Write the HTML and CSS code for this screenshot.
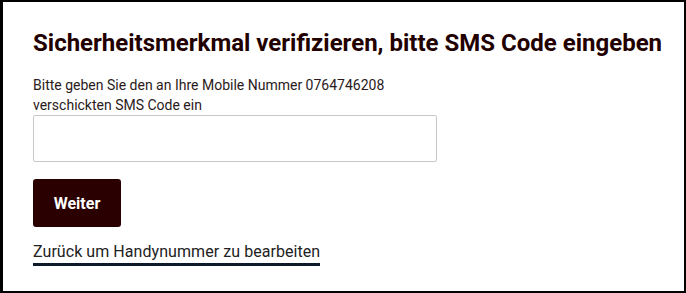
FILE: index.html
```html
<!DOCTYPE html>
<html lang="de">
<head>
<meta charset="utf-8">
<link rel="stylesheet" href="styles.css">
</head>
<body>
<div class="frame">
  <h1 class="title">Sicherheitsmerkmal verifizieren, bitte SMS Code eingeben</h1>
  <p class="hint">Bitte geben Sie den an Ihre Mobile Nummer 0764746208<br>verschickten SMS Code ein</p>
  <input class="code" type="text">
  <button class="btn" type="button">Weiter</button>
  <a class="back" href="#">Zurück um Handynummer zu bearbeiten</a>
</div>
</body>
</html>
```

FILE: styles.css
```css
html, body {
  margin: 0;
  padding: 0;
  background: #fff;
}
.frame {
  box-sizing: border-box;
  width: 686px;
  height: 293px;
  border: 2px solid #000;
  border-left-width: 3px;
  padding: 26px 0 0 30px;
  display: flex;
  flex-direction: column;
  align-items: flex-start;
  font-family: Roboto, "Liberation Sans", sans-serif;
}
.title {
  margin: 0;
  font-size: 24px;
  font-weight: 700;
  line-height: 30px;
  color: #220000;
}
.hint {
  margin: 17px 0 0;
  font-size: 14px;
  line-height: 20px;
  color: #2a1a1a;
}
.code {
  box-sizing: border-box;
  margin: 0;
  width: 404px;
  height: 47px;
  border: 1px solid #c8c8c8;
  border-radius: 2px;
  background: #fff;
}
.btn {
  margin-top: 17px;
  width: 88px;
  height: 48px;
  border: 0;
  border-radius: 3px;
  background: #2b0000;
  color: #fff;
  font-family: inherit;
  font-size: 16px;
  font-weight: 700;
}
.back {
  margin-top: 14px;
  font-size: 16px;
  line-height: 22px;
  letter-spacing: 0.06px;
  color: #222;
  text-decoration: none;
  border-bottom: 3px solid #0c1a2a;
}
```
